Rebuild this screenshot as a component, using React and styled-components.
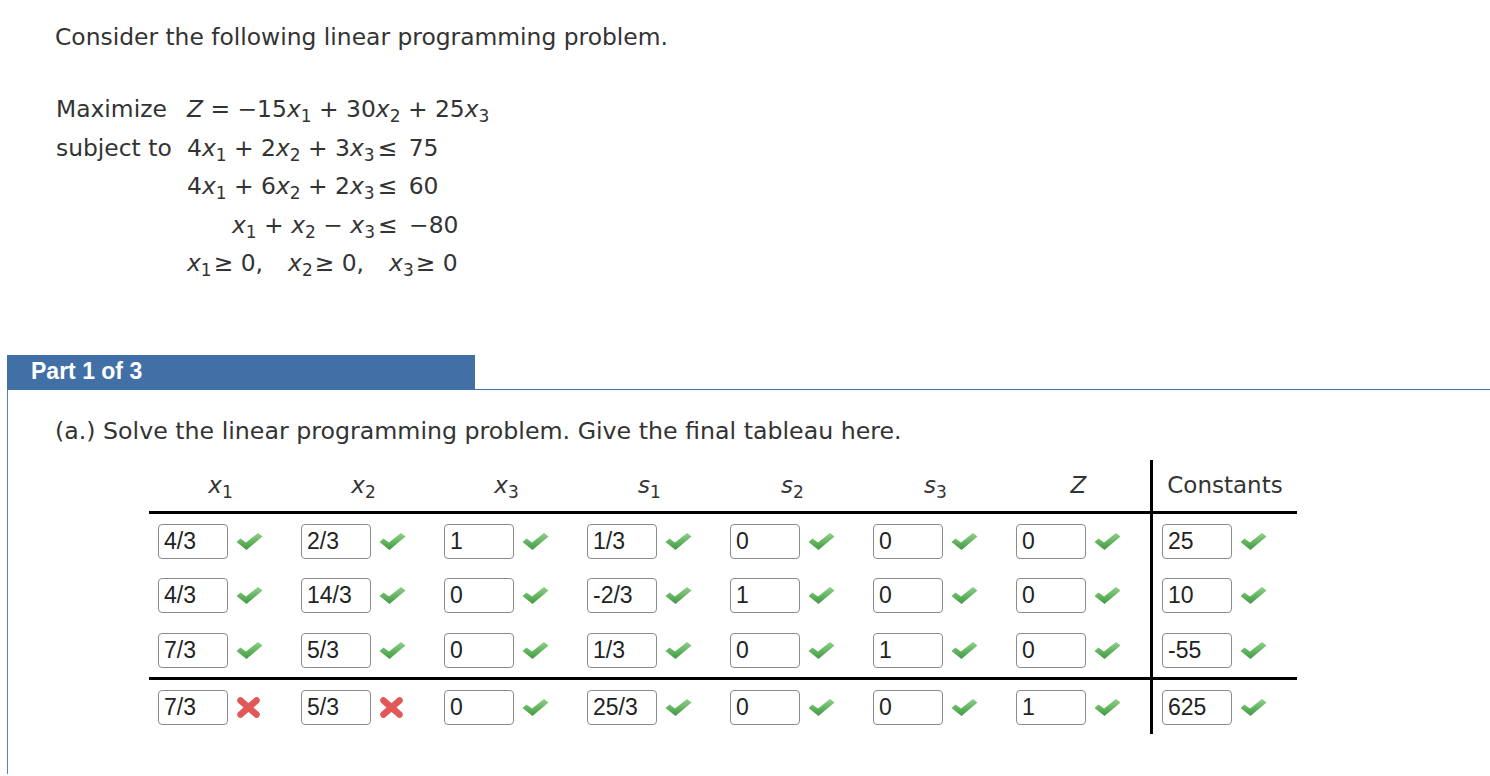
import React from "react";
import styled, { createGlobalStyle } from "styled-components";

const GlobalStyle = createGlobalStyle`
  body {
    margin: 0;
    background: #fff;
    color: #333;
    font-family: "DejaVu Sans", Verdana, sans-serif;
  }
`;

const Page = styled.div`
  width: 1490px;
  min-height: 776px;
  padding-top: 24px;
  box-sizing: border-box;
`;

const Intro = styled.p`
  margin: 0 0 0 55px;
  font-size: 23.4px;
  line-height: 26px;
`;

const MathBlock = styled.div`
  display: grid;
  grid-template-columns: 131px auto;
  margin: 40px 0 0 56px;
  font-size: 23.4px;
  line-height: 38.5px;
`;

const Label = styled.div`
  white-space: nowrap;
`;

const Expr = styled.div`
  white-space: nowrap;
  padding-left: ${(p) => p.$indent || 0}px;
`;

const Var = styled.i`
  font-style: italic;
`;

const Sub = styled.sub`
  font-size: 17px;
  vertical-align: -5px;
  line-height: 0;
  font-style: normal;
`;

const Gap = styled.span`
  display: inline-block;
  width: ${(p) => p.$w}px;
`;

const Section = styled.section`
  margin: 72px 0 0 7px;
`;

const Tab = styled.div`
  width: 468px;
  height: 34px;
  box-sizing: border-box;
  padding-left: 24px;
  display: flex;
  align-items: center;
  background: #4170a6;
  color: #fff;
  font-family: "Liberation Sans", Arial, sans-serif;
  font-weight: bold;
  font-size: 23px;
`;

const Body = styled.div`
  border-top: 1px solid #4170a6;
  border-left: 1px solid #5a82b3;
  min-height: 385px;
  padding: 27px 0 0 47px;
  box-sizing: border-box;
`;

const Prompt = styled.p`
  margin: 0;
  font-size: 23.7px;
  line-height: 28px;
`;

const Tableau = styled.div`
  display: grid;
  grid-template-columns: repeat(7, 143px) 147px;
  width: 1148px;
  margin: 15px 0 0 94px;
`;

const HeadCell = styled.div`
  height: 51px;
  display: flex;
  align-items: center;
  justify-content: center;
  border-bottom: 3px solid #000;
  border-left: ${(p) => (p.$divider ? "3px solid #000" : "none")};
  font-size: 23px;
  line-height: 26px;
  color: #333;
`;

const HeadLabel = styled.span`
  white-space: nowrap;
`;

const Cell = styled.div`
  display: flex;
  align-items: center;
  gap: 8px;
  padding: 10px 0 ${(p) => (p.$last ? 9 : 9.5)}px 9px;
  border-left: ${(p) => (p.$divider ? "3px solid #000" : "none")};
  border-top: ${(p) => (p.$rule ? "3px solid #000" : "none")};
`;

const Answer = styled.input`
  width: 70px;
  height: 35px;
  box-sizing: border-box;
  border: 1px solid #8c8c8c;
  border-radius: 4px;
  padding: 0 0 0 5px;
  font-family: "Liberation Sans", Arial, sans-serif;
  font-size: 23px;
  color: #222;
  background: #fff;
  outline: none;
`;

const Mark = styled.svg`
  flex: none;
`;

const Check = () => (
  <Mark width="27" height="19" viewBox="0 0 27 19">
    <defs>
      <linearGradient id="ok" x1="0" y1="0" x2="0" y2="1">
        <stop offset="0" stopColor="#8fd189" />
        <stop offset="1" stopColor="#3f9a3f" />
      </linearGradient>
    </defs>
    <path d="M0.5 10 L4.5 6.5 L10 10.5 L22 1 L26.5 4.5 L10.5 18 Z" fill="url(#ok)" />
  </Mark>
);

const Cross = () => (
  <Mark width="25" height="23" viewBox="0 0 25 23">
    <g stroke="#e05858" strokeWidth="6.5" strokeLinecap="round">
      <line x1="4.5" y1="4.5" x2="20.5" y2="18.5" />
      <line x1="20.5" y1="4.5" x2="4.5" y2="18.5" />
    </g>
  </Mark>
);

const X = ({ n }) => (
  <>
    <Var>x</Var>
    <Sub>{n}</Sub>
  </>
);

const headers = [
  ["x", "1"],
  ["x", "2"],
  ["x", "3"],
  ["s", "1"],
  ["s", "2"],
  ["s", "3"],
  ["Z", null],
];

const rows = [
  ["4/3", "2/3", "1", "1/3", "0", "0", "0", "25"],
  ["4/3", "14/3", "0", "-2/3", "1", "0", "0", "10"],
  ["7/3", "5/3", "0", "1/3", "0", "1", "0", "-55"],
  ["7/3", "5/3", "0", "25/3", "0", "0", "1", "625"],
];

const wrong = { "3-0": true, "3-1": true };

export default function App() {
  return (
    <Page>
      <GlobalStyle />
      <Intro>Consider the following linear programming problem.</Intro>

      <MathBlock>
        <Label>Maximize</Label>
        <Expr>
          <Var>Z</Var> = −15<X n="1" /> + 30<X n="2" /> + 25<X n="3" />
        </Expr>
        <Label>subject to</Label>
        <Expr>
          4<X n="1" /> + 2<X n="2" /> + 3<X n="3" /><Gap $w={3} />≤<Gap $w={4} /> 75
        </Expr>
        <Label />
        <Expr>
          4<X n="1" /> + 6<X n="2" /> + 2<X n="3" /><Gap $w={3} />≤<Gap $w={4} /> 60
        </Expr>
        <Label />
        <Expr $indent={45}>
          <X n="1" /> + <X n="2" /> − <X n="3" /><Gap $w={3} />≤<Gap $w={4} /> −80
        </Expr>
        <Label />
        <Expr>
          <X n="1" /><Gap $w={2} />≥ 0,<Gap $w={25} />
          <X n="2" /><Gap $w={2} />≥ 0,<Gap $w={25} />
          <X n="3" /><Gap $w={2} />≥ 0
        </Expr>
      </MathBlock>

      <Section>
        <Tab>Part 1 of 3</Tab>
        <Body>
          <Prompt>(a.) Solve the linear programming problem. Give the final tableau here.</Prompt>
          <Tableau>
            {headers.map(([v, n], i) => (
              <HeadCell key={i}>
                <HeadLabel>
                  <Var>{v}</Var>
                  {n && <Sub>{n}</Sub>}
                </HeadLabel>
              </HeadCell>
            ))}
            <HeadCell $divider>Constants</HeadCell>
            {rows.map((row, r) =>
              row.map((val, c) => (
                <Cell key={`${r}-${c}`} $divider={c === 7} $rule={r === 3} $last={r === 3}>
                  <Answer readOnly defaultValue={val} />
                  {wrong[`${r}-${c}`] ? <Cross /> : <Check />}
                </Cell>
              ))
            )}
          </Tableau>
        </Body>
      </Section>
    </Page>
  );
}
